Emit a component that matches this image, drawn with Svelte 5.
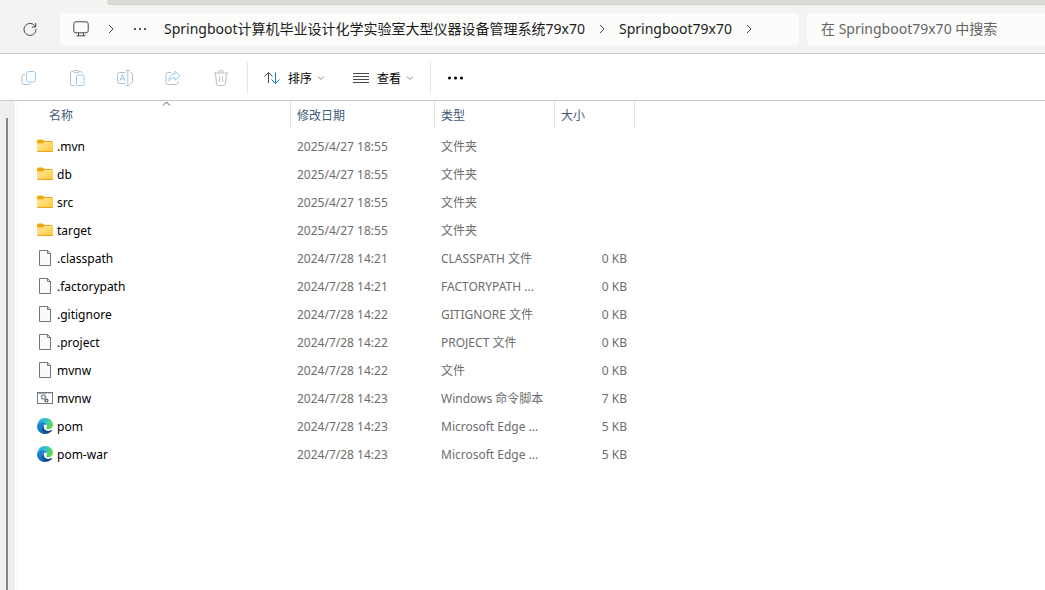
<script>
  const files = [
    { icon: 'folder', name: '.mvn', date: '2025/4/27 18:55', type: '文件夹', size: '' },
    { icon: 'folder', name: 'db', date: '2025/4/27 18:55', type: '文件夹', size: '' },
    { icon: 'folder', name: 'src', date: '2025/4/27 18:55', type: '文件夹', size: '' },
    { icon: 'folder', name: 'target', date: '2025/4/27 18:55', type: '文件夹', size: '' },
    { icon: 'file', name: '.classpath', date: '2024/7/28 14:21', type: 'CLASSPATH 文件', size: '0 KB' },
    { icon: 'file', name: '.factorypath', date: '2024/7/28 14:21', type: 'FACTORYPATH ...', size: '0 KB' },
    { icon: 'file', name: '.gitignore', date: '2024/7/28 14:22', type: 'GITIGNORE 文件', size: '0 KB' },
    { icon: 'file', name: '.project', date: '2024/7/28 14:22', type: 'PROJECT 文件', size: '0 KB' },
    { icon: 'file', name: 'mvnw', date: '2024/7/28 14:22', type: '文件', size: '0 KB' },
    { icon: 'script', name: 'mvnw', date: '2024/7/28 14:23', type: 'Windows 命令脚本', size: '7 KB' },
    { icon: 'edge', name: 'pom', date: '2024/7/28 14:23', type: 'Microsoft Edge ...', size: '5 KB' },
    { icon: 'edge', name: 'pom-war', date: '2024/7/28 14:23', type: 'Microsoft Edge ...', size: '5 KB' },
  ];

  const actions = [
    { id: 'copy', label: '复制' },
    { id: 'paste', label: '粘贴' },
    { id: 'rename', label: '重命名' },
    { id: 'share', label: '共享' },
    { id: 'delete', label: '删除' },
  ];

  let search = $state('');
</script>

{#snippet chevron()}
  <svg class="chevron" width="6" height="10" viewBox="0 0 6 10" aria-hidden="true"><path d="M1 1l4 4-4 4" /></svg>
{/snippet}

{#snippet caret()}
  <svg class="caret" width="8" height="6" viewBox="0 0 8 6" aria-hidden="true"><path d="M1 1.5l3 3 3-3" /></svg>
{/snippet}

<!-- shared gradients for the file icons -->
<svg class="defs" width="0" height="0" aria-hidden="true">
  <defs>
    <linearGradient id="folder-front" x1="0" y1="0" x2="1" y2="1">
      <stop offset="0" stop-color="#ffe9a0" />
      <stop offset="1" stop-color="#ffc937" />
    </linearGradient>
    <linearGradient id="edge-top" x1="0" y1="0" x2="1" y2="0.4">
      <stop offset="0" stop-color="#1b9de2" />
      <stop offset="0.5" stop-color="#2fc2cf" />
      <stop offset="1" stop-color="#62d84f" />
    </linearGradient>
    <linearGradient id="edge-left" x1="0" y1="0" x2="0.4" y2="1">
      <stop offset="0" stop-color="#1b93dd" />
      <stop offset="1" stop-color="#1268bb" />
    </linearGradient>
  </defs>
</svg>

<div class="explorer">
  <header>
    <div class="titlebar"><div class="strip"></div></div>
    <div class="nav">
      <button class="refresh" aria-label="刷新">
        <svg width="14" height="14" viewBox="0 0 14 14"><path d="M12.5 5A6 6 0 1 0 13 7M12.7 1v4H8.8" /></svg>
      </button>
      <nav class="address" aria-label="地址栏">
        <button class="pc" aria-label="此电脑">
          <svg width="16" height="16" viewBox="0 0 16 16">
            <rect x="0.8" y="0.8" width="14.4" height="11" rx="2" />
            <path d="M5.5 12v2.7M10.5 12v2.7M3.5 14.8h9" />
          </svg>
        </button>
        {@render chevron()}
        <button class="crumb-more" aria-label="更多">
          <svg width="12" height="2" viewBox="0 0 12 2"><circle cx="1" cy="1" r="0.9" /><circle cx="6" cy="1" r="0.9" /><circle cx="11" cy="1" r="0.9" /></svg>
        </button>
        <a href="#parent">Springboot计算机毕业设计化学实验室大型仪器设备管理系统79x70</a>
        {@render chevron()}
        <a href="#current">Springboot79x70</a>
        {@render chevron()}
      </nav>
      <input class="search" type="text" bind:value={search} placeholder="在 Springboot79x70 中搜索" aria-label="搜索" />
    </div>
  </header>

  <div class="toolbar">
    <div class="actions">
      {#each actions as action (action.id)}
        <button disabled aria-label={action.label}>
          <svg width="16" height="16" viewBox="0 0 16 16">
            {#if action.id === 'copy'}
              <path d="M4 4.500H3a2 2 0 0 0-2 2v6a2 2 0 0 0 2 2h4.500a2 2 0 0 0 2-1.500" />
              <rect class="blue" x="5.500" y="1.500" width="9" height="10.500" rx="2" />
            {:else if action.id === 'paste'}
              <path d="M5.500 15.500H3a1.500 1.500 0 0 1-1.500-1.500V3A1.500 1.500 0 0 1 3 1.500h1.500M10 1.500h1.500A1.500 1.500 0 0 1 13 3" />
              <rect x="4.500" y="0.500" width="5.500" height="2.200" rx="1" />
              <rect class="blue" x="7.500" y="5" width="7.500" height="10.500" rx="1" />
            {:else if action.id === 'rename'}
              <path d="M8.500 13.500H2.500a2 2 0 0 1-2-2v-7a2 2 0 0 1 2-2h6M13 2.500h.5a2 2 0 0 1 2 2v7a2 2 0 0 1-2 2H13" />
              <path class="blue" d="M2.800 11l2.700-6.500L8.200 11M3.800 9h3.400M10.800.5v15M8.800.5h4M8.800 15.500h4" />
            {:else if action.id === 'share'}
              <path d="M6 2.500H3a2 2 0 0 0-2 2v8a2 2 0 0 0 2 2h8a2 2 0 0 0 2-2V11" />
              <path class="blue" d="M10 1.200l5 4.600-5 4.500V7.800c-3 0-4.800 1-6.200 3C4 7 6 4.200 10 3.800z" />
            {:else}
              <path d="M.8 3h14.400M5.500 2.800a2.500 2.500 0 0 1 5 0M2.500 3.200l1 10.500a2 2 0 0 0 2 1.800h5a2 2 0 0 0 2-1.800l1-10.500M6.500 6.500v5.500M9.500 6.500v5.500" />
            {/if}
          </svg>
        </button>
      {/each}
    </div>
    <div class="menus">
      <button class="menu">
        <svg width="16" height="14" viewBox="0 0 16 14">
          <path d="M4.500 12V1.500M.5 5.500l4-4 4 4" />
          <path class="accent" d="M11.500 1.500v11M7.500 8.500l4 4 4-4" />
        </svg>
        <span>排序</span>
        {@render caret()}
      </button>
      <button class="menu">
        <svg width="16" height="11" viewBox="0 0 16 11"><path d="M0 .5h16M0 3.500h16M0 6.500h16M0 9.500h16" /></svg>
        <span>查看</span>
        {@render caret()}
      </button>
    </div>
    <button class="more" aria-label="查看更多">
      <svg width="17" height="4" viewBox="0 0 17 4"><circle cx="2.500" cy="2" r="1.500" /><circle cx="8.500" cy="2" r="1.500" /><circle cx="14.500" cy="2" r="1.500" /></svg>
    </button>
  </div>

  <div class="content">
    <aside><div class="thumb"></div></aside>
    <main>
      <table>
        <thead>
          <tr>
            <th class="name" aria-sort="ascending">
              名称
              <span class="sort"><svg width="9" height="5" viewBox="0 0 9 5"><path d="M1 4.500l3.500-3.500L8 4.500" /></svg></span>
            </th>
            <th class="date">修改日期</th>
            <th class="type">类型</th>
            <th class="size">大小</th>
          </tr>
        </thead>
        <tbody>
          {#each files as file}
            <tr>
              <td class="name">
                <div class="entry">
                  <svg width="16" height="16" viewBox="0 0 16 16" aria-hidden="true">
                    {#if file.icon === 'folder'}
                      <path d="M0 3a1.500 1.500 0 0 1 1.500-1.500h4L7.500 3H14.500A1.500 1.500 0 0 1 16 4.500V7H0z" fill="#f2a90f" />
                      <path d="M0 5.500h6L7.500 4H15a1 1 0 0 1 1 1v8a1 1 0 0 1-1 1H1a1 1 0 0 1-1-1z" fill="url(#folder-front)" />
                      <path d="M.3 13.500h15.400" stroke="#eaa51d" />
                    {:else if file.icon === 'file'}
                      <path d="M2.500.5h8l3 3v12h-11z" fill="#fafafa" stroke="#757575" />
                      <path d="M10.500.5v3h3" fill="none" stroke="#757575" />
                    {:else if file.icon === 'script'}
                      <rect x="0.5" y="2.500" width="15" height="11" fill="#fff" stroke="#777" />
                      <path d="M1 3.500h14" stroke="#aaa" stroke-dasharray="9 1 1 1 1 1" />
                      <circle cx="6.500" cy="7" r="2" fill="none" stroke="#8e9aa3" stroke-width="1.600" />
                      <circle cx="9.500" cy="10.500" r="1.400" fill="none" stroke="#59636b" stroke-width="1.300" />
                    {:else}
                      <path d="M.2 7.500C.6 3 4 0 8.200 0 12.800 0 16 3.200 16 6.800c0 2.700-2 4.400-4.200 4.400-1.900 0-2.700-.7-2.500-1.300.2-.5.800-1 .8-2.200C10.100 5.800 7.900 4 5.300 4 2.600 4 .7 5.600.2 7.500z" fill="url(#edge-top)" />
                      <path d="M.1 7.600C.6 5.500 2.600 4 5.300 4c2.500 0 4.500 1.500 4.800 3.200C8.800 5.800 5.800 6.300 5.500 9.300c-.2 3 2 5.900 5 6.200C5.300 17.300-.5 13.500.1 7.600z" fill="url(#edge-left)" />
                      <path d="M6.900 6.900c-3 1.500-2.400 7.800 3.200 8.800 2-.3 3.900-1.500 5-3.200.2-.4-.1-.6-.4-.4-3 1.600-6.700.7-7.600-1.600-.6-1.400-.4-2.600-.2-3.600z" fill="#114a8b" />
                    {/if}
                  </svg>
                  <span>{file.name}</span>
                </div>
              </td>
              <td>{file.date}</td>
              <td>{file.type}</td>
              <td class="size">{file.size}</td>
            </tr>
          {/each}
        </tbody>
      </table>
    </main>
  </div>
</div>

<style>
  :global(body) {
    margin: 0;
    background: #fff;
  }

  .explorer {
    display: flex;
    flex-direction: column;
    min-height: 100vh;
    font-family: 'Noto Sans', 'Noto Sans CJK SC', sans-serif;
    font-size: 12px;
    color: #1b1b1b;
  }

  .defs {
    position: absolute;
  }

  button {
    display: flex;
    align-items: center;
    justify-content: center;
    padding: 0;
    border: 0;
    background: none;
    font: inherit;
    color: inherit;
  }

  svg {
    flex: none;
    display: block;
  }

  header {
    background: #f3f3f1;
    border-bottom: 1px solid #c8c8c6;
  }

  .titlebar {
    padding-left: 107px;
  }

  .strip {
    height: 4px;
    border-bottom: 1px solid #cfcec9;
    border-bottom-left-radius: 4px;
    background: #dadad5;
  }

  .nav {
    display: flex;
    align-items: center;
    padding: 8px 0;
  }

  .refresh {
    width: 60px;
    height: 32px;
  }

  .refresh path,
  .pc svg,
  .chevron {
    fill: none;
    stroke: #444;
  }

  .address {
    flex: 1;
    display: flex;
    align-items: center;
    height: 32px;
    padding-left: 12px;
    border-radius: 4px;
    background: #fcfcfa;
    font-size: 14px;
    white-space: nowrap;
  }

  .pc {
    width: 18px;
    margin-right: 4px;
  }

  .address .chevron {
    margin: 0 14px;
  }

  .crumb-more {
    width: 12px;
    margin: 0 18px 0 6px;
  }

  .address a {
    padding-bottom: 2px;
    color: #1b1b1b;
    text-decoration: none;
  }

  .search {
    box-sizing: border-box;
    width: 238px;
    height: 32px;
    margin-left: 8px;
    padding: 0 14px 2px;
    border: 0;
    border-radius: 4px 0 0 4px;
    background: #fcfcfa;
    font-family: inherit;
    font-size: 14px;
    outline: none;
  }

  .search::placeholder {
    color: #646464;
    opacity: 1;
  }

  .toolbar {
    display: flex;
    align-items: center;
    padding: 8px 0 6px 5px;
    border-bottom: 1px solid #c8c8c6;
  }

  .actions,
  .menus {
    display: flex;
    align-items: center;
    height: 32px;
    border-right: 1px solid #e9e9e9;
  }

  .actions {
    padding-right: 2px;
  }

  .actions button {
    width: 48px;
    height: 32px;
  }

  .actions svg {
    fill: none;
    stroke: #bdbdbd;
  }

  .actions .blue {
    stroke: #9acbee;
  }

  .menus {
    gap: 28px;
    padding: 0 16px;
  }

  .menu {
    gap: 8px;
    height: 32px;
    color: #000;
  }

  .menu svg {
    fill: none;
    stroke: #4a4a4a;
  }

  .menu .accent {
    stroke: #0f78d0;
  }

  .menu .caret {
    margin-left: -3px;
    stroke: #8c8c8c;
  }

  .more {
    width: 48px;
    height: 32px;
  }

  .content {
    flex: 1;
    display: flex;
  }

  aside {
    display: flex;
    width: 15px;
    margin-right: 2px;
    background: #efefef;
  }

  .thumb {
    width: 2px;
    margin: 17px 0 0 6px;
    background: #858585;
  }

  main {
    flex: 1;
    border-left: 1px solid #f3f3f3;
  }

  table {
    width: 617px;
    table-layout: fixed;
    border-collapse: separate;
    border-spacing: 0;
  }

  th {
    position: relative;
    box-sizing: border-box;
    height: 27px;
    padding: 0 6px;
    border-right: 1px solid #e2e2e2;
    font-weight: 400;
    text-align: left;
    color: #44597a;
  }

  th.name {
    width: 273px;
    padding-left: 31px;
  }

  th.date {
    width: 144px;
  }

  th.type {
    width: 120px;
  }

  th.size {
    width: 80px;
  }

  .sort {
    position: absolute;
    top: 0;
    right: 0;
    left: 24px;
    display: flex;
    justify-content: center;
  }

  .sort svg {
    fill: none;
    stroke: #555;
  }

  tbody::before {
    content: '';
    display: block;
    height: 4px;
  }

  td {
    height: 28px;
    padding: 0 0 0 6px;
    white-space: nowrap;
    color: #6d6d6d;
  }

  td.name {
    padding-left: 19px;
    color: #000;
  }

  td.size {
    padding-right: 8px;
    text-align: right;
  }

  .entry {
    display: flex;
    align-items: center;
    gap: 4px;
  }
</style>
